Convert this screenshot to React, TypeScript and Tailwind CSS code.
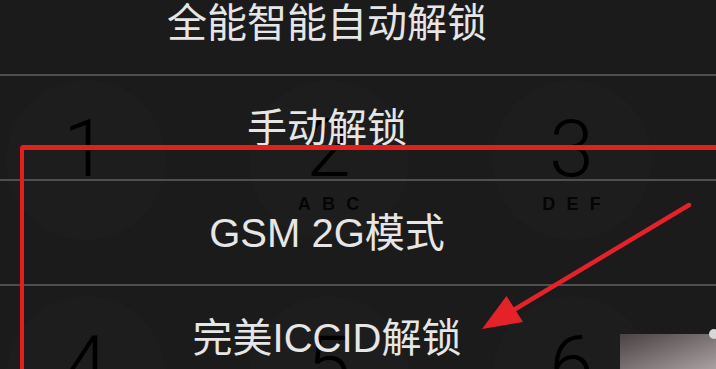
import React from 'react';

// 背景のキーパッド
const keys = [
  { digit: '1', letters: '' },
  { digit: '2', letters: 'ABC' },
  { digit: '3', letters: 'DEF' },
  { digit: '4', letters: '' },
  { digit: '5', letters: '' },
  { digit: '6', letters: '' },
];

const menuItems = ['全能智能自动解锁', '手动解锁', 'GSM 2G模式', '完美ICCID解锁'];

const KeypadKey: React.FC<{ digit: string; letters: string }> = ({ digit, letters }) => (
  <div className="flex justify-center">
    <div className="flex flex-col items-center w-[160px] h-[160px] rounded-full bg-[#1d1d1d] pt-[29px]">
      <div
        className="text-[80px] leading-none font-light text-black"
        style={{ fontFamily: 'Roboto, "Liberation Sans", sans-serif' }}
      >
        {digit}
      </div>
      {letters && (
        <div className="mt-[6px] text-[18px] leading-none font-bold tracking-[0.62em] pl-[0.62em] text-[#050505] font-['Liberation_Sans',sans-serif]">
          {letters}
        </div>
      )}
    </div>
  </div>
);

const App: React.FC = () => {
  return (
    <div className="relative w-[716px] h-[369px] overflow-hidden bg-[#1b1b1b]">
      {/* キーパッド（メニューの下） */}
      <div className="grid grid-cols-3 w-[729px] ml-[-36px] pt-[80px] gap-y-[56px]">
        {keys.map(k => (
          <KeypadKey key={k.digit} digit={k.digit} letters={k.letters} />
        ))}
      </div>

      {/* アクションシートのメニュー */}
      <div className="absolute left-0 right-0 top-[-29px] flex flex-col">
        {menuItems.map(item => (
          <div
            key={item}
            className="flex items-center justify-center h-[105px] pr-[62px] border-b-2 border-[#4f4f4f] text-[40px] text-[#e6e6e6] font-['Liberation_Sans','Noto_Sans_CJK_SC',sans-serif]"
          >
            {item}
          </div>
        ))}
      </div>

      {/* 赤い枠 */}
      <div className="absolute left-[20px] top-[145px] right-[-10px] bottom-[-10px] border-l-[4px] border-t-[5px] border-[#e41f1b] rounded-tl-[4px]" />

      {/* 矢印 */}
      <svg className="absolute inset-0" width="716" height="369" viewBox="0 0 716 369">
        <line x1="689" y1="205" x2="512" y2="311" stroke="#e5222a" strokeWidth="4.5" strokeLinecap="round" />
        <polygon points="482,329 506.5,296 523,322" fill="#e5222a" />
      </svg>

      {/* 右下の透かし */}
      <div className="absolute left-[620px] top-[334px] right-0 bottom-0 bg-linear-to-br from-[#4a4244] to-[#aaa2a2]" />
      <div className="absolute left-[709px] top-[329px] w-[10px] h-[10px] rounded-full bg-[#d8d8d8]" />
    </div>
  );
};

export default App;
